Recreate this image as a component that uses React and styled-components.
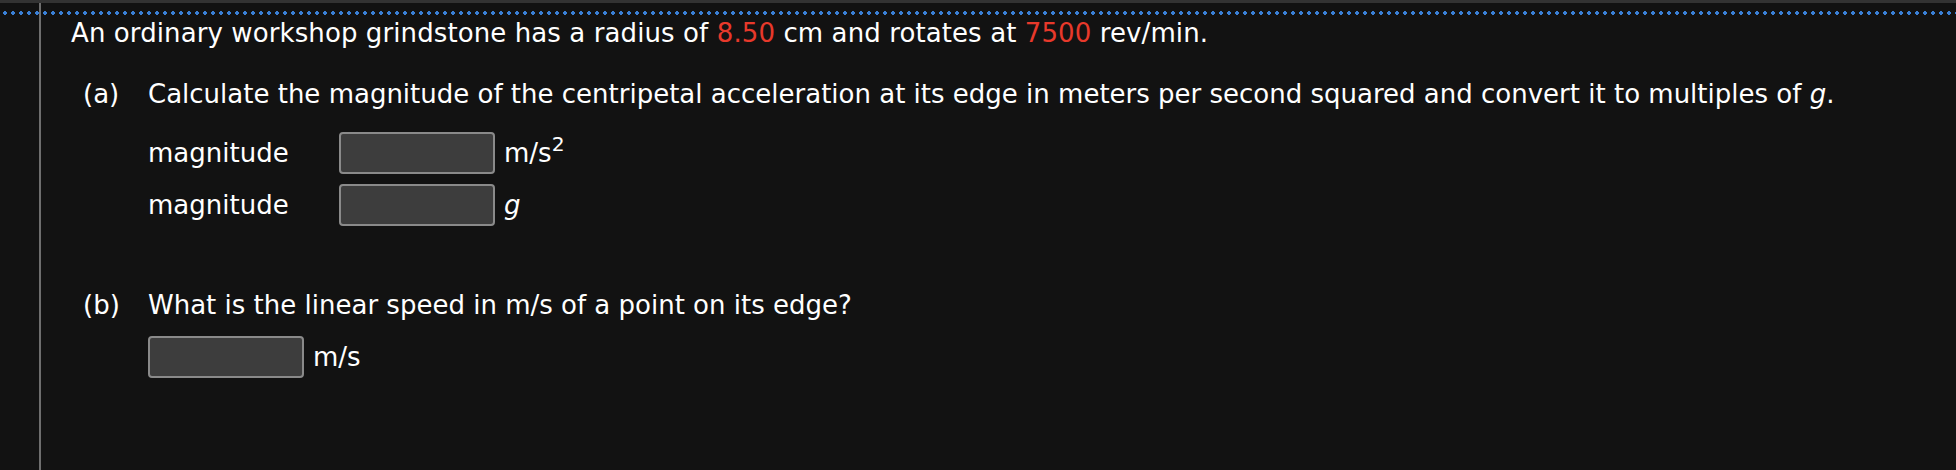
import React from "react";
import styled, { createGlobalStyle } from "styled-components";

const GlobalStyle = createGlobalStyle`
  html, body {
    margin: 0;
    padding: 0;
    background: #121212;
  }
  body {
    font-family: "DejaVu Sans", Verdana, sans-serif;
    color: #ffffff;
  }
`;

const Page = styled.div`
  min-height: 470px;
  display: flex;
  flex-direction: column;
  border-top: 3px solid #333333;
  box-sizing: border-box;
`;

// dotted blue rule runs across the whole width, gutter line is painted over it
const Frame = styled.div`
  flex: 1;
  display: grid;
  grid-template-columns: 41px 1fr;
  background-image: radial-gradient(circle, #3a80d6 1.6px, transparent 2px);
  background-size: 8px 8px;
  background-repeat: repeat-x;
  background-position: 1px 6px;
`;

const Gutter = styled.div`
  border-right: 2px solid #6e6e6e;
`;

const Content = styled.div`
  padding: 15px 0 0 30px;
  font-size: 26px;
  line-height: 30px;
`;

const Intro = styled.p`
  margin: 0;
  letter-spacing: 0.1px;
`;

const Red = styled.span`
  color: #e8392b;
`;

const Var = styled.i`
  font-style: italic;
`;

const Part = styled.section`
  display: grid;
  grid-template-columns: 65px 1fr;
  padding-left: 12px;
  margin-top: ${(p) => p.$top}px;
`;

const PartLabel = styled.span``;

const PartBody = styled.div`
  display: flex;
  flex-direction: column;
`;

const Prompt = styled.p`
  margin: 0;
`;

const Answers = styled.div`
  display: flex;
  flex-direction: column;
  gap: 10px;
  margin-top: ${(p) => p.$top}px;
`;

const AnswerRow = styled.div`
  display: flex;
  align-items: center;
  height: 42px;
`;

const FieldLabel = styled.span`
  width: 191px;
`;

const Box = styled.input`
  width: 156px;
  height: 42px;
  box-sizing: border-box;
  border: 2px solid #8a8a8a;
  border-radius: 4px;
  background: #3d3d3d;
  color: #fff;
  font: inherit;
  padding: 0 6px;
  outline: none;
`;

const Unit = styled.span`
  margin-left: 9px;

  sup {
    font-size: 0.78em;
    line-height: 0;
    vertical-align: 0.55em;
  }
`;

export default function App() {
  return (
    <>
      <GlobalStyle />
      <Page>
        <Frame>
          <Gutter />
          <Content>
            <Intro>
              An ordinary workshop grindstone has a radius of <Red>8.50</Red> cm
              and rotates at <Red>7500</Red> rev/min.
            </Intro>

            <Part $top={31}>
              <PartLabel>(a)</PartLabel>
              <PartBody>
                <Prompt>
                  Calculate the magnitude of the centripetal acceleration at its
                  edge in meters per second squared and convert it to multiples
                  of <Var>g</Var>.
                </Prompt>
                <Answers $top={23}>
                  <AnswerRow>
                    <FieldLabel>magnitude</FieldLabel>
                    <Box type="text" />
                    <Unit>
                      m/s<sup>2</sup>
                    </Unit>
                  </AnswerRow>
                  <AnswerRow>
                    <FieldLabel>magnitude</FieldLabel>
                    <Box type="text" />
                    <Unit>
                      <Var>g</Var>
                    </Unit>
                  </AnswerRow>
                </Answers>
              </PartBody>
            </Part>

            <Part $top={64}>
              <PartLabel>(b)</PartLabel>
              <PartBody>
                <Prompt>What is the linear speed in m/s of a point on its edge?</Prompt>
                <Answers $top={16}>
                  <AnswerRow>
                    <Box type="text" />
                    <Unit>m/s</Unit>
                  </AnswerRow>
                </Answers>
              </PartBody>
            </Part>
          </Content>
        </Frame>
      </Page>
    </>
  );
}
